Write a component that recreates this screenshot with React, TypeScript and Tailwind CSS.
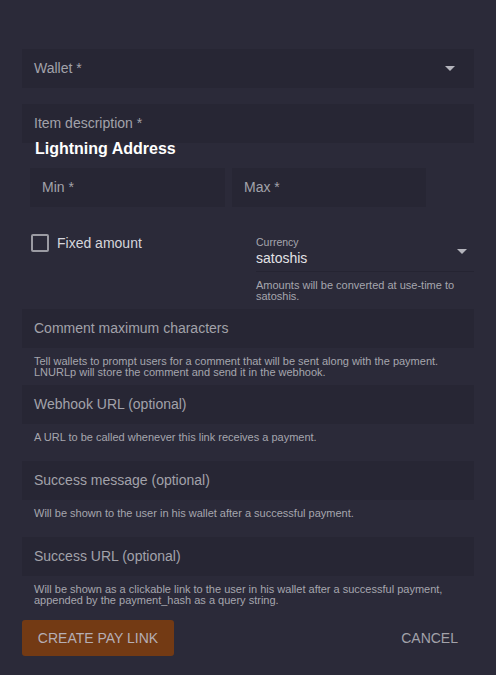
const Arrow = () => (
  <svg width="10" height="5" viewBox="0 0 10 5" className="block">
    <path d="M0 0 L10 0 L5 5 Z" fill="#b4b4bc" />
  </svg>
);

const Field = ({ label, className = '' }: { label: string; className?: string }) => (
  <div className={`h-[39px] bg-[#272634] flex items-center px-3 ${className}`}>
    <span className="text-[14px] text-[#a2a2aa]">{label}</span>
  </div>
);

const Hint = ({ children }: { children: React.ReactNode }) => (
  <div className="h-[21px] pt-2 px-3 text-[11px] leading-[11px] text-[#a6a6ae]">{children}</div>
);

const TextBlock = ({ label, hint }: { label: string; hint: React.ReactNode }) => (
  <div>
    <Field label={label} />
    <Hint>{hint}</Hint>
  </div>
);

export default function App() {
  return (
    <div className="min-h-screen w-full bg-[#2b2a39] pt-[49px] px-[22px] font-['Liberation_Sans',Arial,sans-serif]">
      {/* wallet select */}
      <div className="h-[39px] bg-[#272634] flex items-center justify-between pl-3 pr-[19px]">
        <span className="text-[14px] text-[#a2a2aa]">Wallet *</span>
        <Arrow />
      </div>

      {/* item description */}
      <Field label="Item description *" className="mt-4" />
      <div className="-mt-1 pl-[13px] h-5 text-[16px] leading-5 font-bold text-white">
        Lightning Address
      </div>

      {/* min / max */}
      <div className="mt-[9px] pl-2 flex gap-[7px]">
        <Field label="Min *" className="w-[195px]" />
        <Field label="Max *" className="w-[194px]" />
      </div>

      {/* fixed amount + currency */}
      <div className="mt-[26px] grid grid-cols-2">
        <div className="pl-[9px] pt-px">
          <div className="flex items-center gap-2 h-[18px]">
            <div className="w-[18px] h-[18px] border-2 border-[#9b9ba3] rounded-[2px]" />
            <span className="text-[14px] text-[#d6d6dc]">Fixed amount</span>
          </div>
        </div>
        <div className="pl-2">
          <div className="flex items-center justify-between pt-[3px] pb-1 border-b border-[#252432] pr-[7px]">
            <div>
              <div className="text-[10.5px] leading-[13px] text-[#a6a6ae]">Currency</div>
              <div className="text-[14px] leading-[18px] text-[#e2e2e6]">satoshis</div>
            </div>
            <Arrow />
          </div>
          <div className="pt-2 text-[11px] leading-[11px] text-[#a6a6ae]">
            Amounts will be converted at use-time to satoshis.
          </div>
        </div>
      </div>

      <div className="mt-[7px] flex flex-col gap-4">
        <TextBlock
          label="Comment maximum characters"
          hint={
            <>
              Tell wallets to prompt users for a comment that will be sent along with the payment.
              <br />
              LNURLp will store the comment and send it in the webhook.
            </>
          }
        />
        <TextBlock label="Webhook URL (optional)" hint="A URL to be called whenever this link receives a payment." />
        <TextBlock
          label="Success message (optional)"
          hint="Will be shown to the user in his wallet after a successful payment."
        />
        <TextBlock
          label="Success URL (optional)"
          hint={
            <>
              Will be shown as a clickable link to the user in his wallet after a successful payment,
              <br />
              appended by the payment_hash as a query string.
            </>
          }
        />
      </div>

      <div className="mt-[23px] flex items-center justify-between">
        <button className="w-[152px] h-9 rounded-[3px] bg-[#733a14] text-[14px] text-[#b5aeb4] uppercase">
          Create pay link
        </button>
        <button className="h-9 px-4 text-[14px] text-[#a2a2aa] uppercase">Cancel</button>
      </div>
    </div>
  );
}
